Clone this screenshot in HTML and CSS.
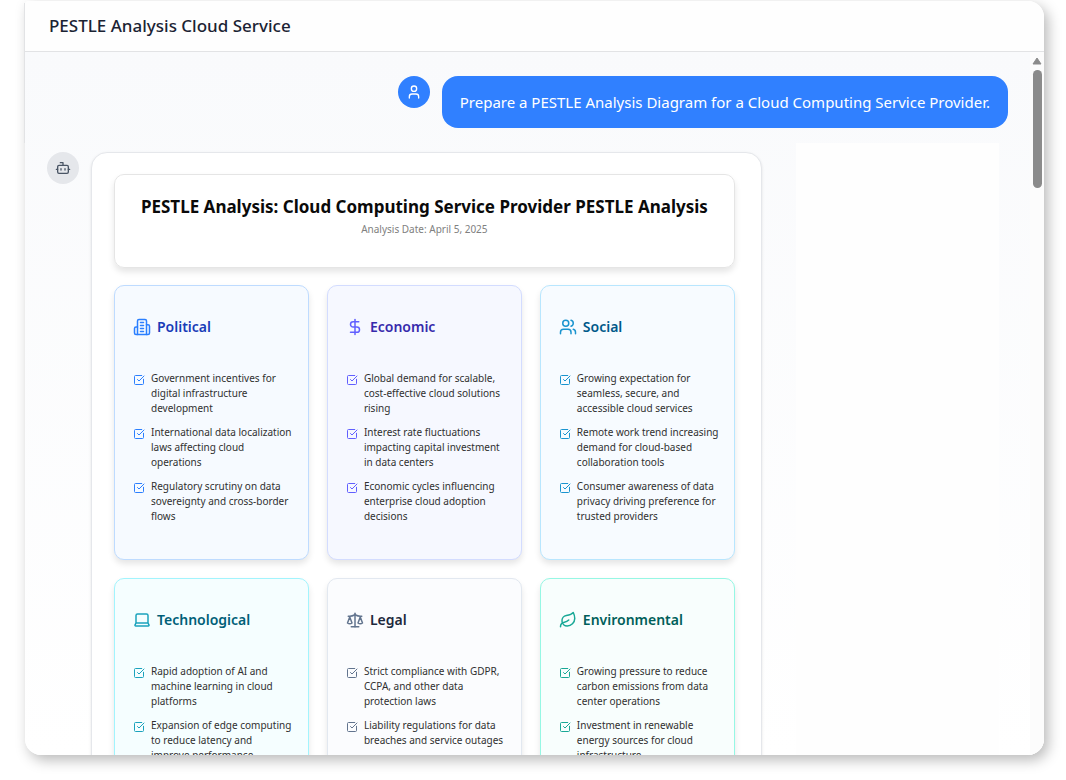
FILE: index.html
```html
<!DOCTYPE html>
<html lang="en">
<head>
    <meta charset="UTF-8">
    <meta name="viewport" content="width=device-width, initial-scale=1.0">
    <title>PESTLE Analysis Cloud Service</title>
    <link rel="stylesheet" href="styles.css">
</head>
<body>
    <!-- shared icons -->
    <svg class="sprite" aria-hidden="true">
        <symbol id="check" viewBox="0 0 24 24">
            <path d="M21 10.5V19a2 2 0 0 1-2 2H5a2 2 0 0 1-2-2V5a2 2 0 0 1 2-2h12.5"/>
            <path d="m9 11 3 3L22 4"/>
        </symbol>
    </svg>

    <div class="window">
        <header class="window-header">
            <h1>PESTLE Analysis Cloud Service</h1>
        </header>

        <main class="chat">
            <div class="message user">
                <div class="avatar">
                    <svg class="icon" viewBox="0 0 24 24"><path d="M19 21v-2a4 4 0 0 0-4-4H9a4 4 0 0 0-4 4v2"/><circle cx="12" cy="7" r="4"/></svg>
                </div>
                <p class="bubble">Prepare a PESTLE Analysis Diagram for a Cloud Computing Service Provider.</p>
            </div>

            <div class="message bot">
                <div class="avatar">
                    <svg class="icon" viewBox="0 0 24 24"><path d="M12 8V4H8"/><rect width="16" height="12" x="4" y="8" rx="2"/><path d="M2 14h2M20 14h2M15 13v2M9 13v2"/></svg>
                </div>
                <article class="report">
                    <div class="report-title">
                        <h2>PESTLE Analysis: Cloud Computing Service Provider PESTLE Analysis</h2>
                        <p>Analysis Date: April 5, 2025</p>
                    </div>

                    <div class="cards">
                        <section class="card political">
                            <h3>
                                <svg class="icon" viewBox="0 0 24 24"><path d="M6 22V4a2 2 0 0 1 2-2h8a2 2 0 0 1 2 2v18Z"/><path d="M6 12H4a2 2 0 0 0-2 2v6a2 2 0 0 0 2 2h2"/><path d="M18 9h2a2 2 0 0 1 2 2v9a2 2 0 0 1-2 2h-2"/><path d="M10 6h4M10 10h4M10 14h4M10 18h4"/></svg>
                                Political
                            </h3>
                            <ul>
                                <li><svg class="icon"><use href="#check"/></svg><span>Government incentives for digital infrastructure development</span></li>
                                <li><svg class="icon"><use href="#check"/></svg><span>International data localization laws affecting cloud operations</span></li>
                                <li><svg class="icon"><use href="#check"/></svg><span>Regulatory scrutiny on data sovereignty and cross-border flows</span></li>
                            </ul>
                        </section>

                        <section class="card economic">
                            <h3>
                                <svg class="icon" viewBox="0 0 24 24"><path d="M12 2v20"/><path d="M17 5H9.5a3.5 3.5 0 0 0 0 7h5a3.5 3.5 0 0 1 0 7H6"/></svg>
                                Economic
                            </h3>
                            <ul>
                                <li><svg class="icon"><use href="#check"/></svg><span>Global demand for scalable, cost-effective cloud solutions rising</span></li>
                                <li><svg class="icon"><use href="#check"/></svg><span>Interest rate fluctuations impacting capital investment in data centers</span></li>
                                <li><svg class="icon"><use href="#check"/></svg><span>Economic cycles influencing enterprise cloud adoption decisions</span></li>
                            </ul>
                        </section>

                        <section class="card social">
                            <h3>
                                <svg class="icon" viewBox="0 0 24 24"><path d="M16 21v-2a4 4 0 0 0-4-4H6a4 4 0 0 0-4 4v2"/><circle cx="9" cy="7" r="4"/><path d="M22 21v-2a4 4 0 0 0-3-3.87"/><path d="M16 3.13a4 4 0 0 1 0 7.75"/></svg>
                                Social
                            </h3>
                            <ul>
                                <li><svg class="icon"><use href="#check"/></svg><span>Growing expectation for seamless, secure, and accessible cloud services</span></li>
                                <li><svg class="icon"><use href="#check"/></svg><span>Remote work trend increasing demand for cloud-based collaboration tools</span></li>
                                <li><svg class="icon"><use href="#check"/></svg><span>Consumer awareness of data privacy driving preference for trusted providers</span></li>
                            </ul>
                        </section>

                        <section class="card technological">
                            <h3>
                                <svg class="icon" viewBox="0 0 24 24"><path d="M20 16V6a2 2 0 0 0-2-2H6a2 2 0 0 0-2 2v10m16 0H4m16 0 1.28 2.55a1 1 0 0 1-.9 1.45H3.62a1 1 0 0 1-.9-1.45L4 16"/></svg>
                                Technological
                            </h3>
                            <ul>
                                <li><svg class="icon"><use href="#check"/></svg><span>Rapid adoption of AI and machine learning in cloud platforms</span></li>
                                <li><svg class="icon"><use href="#check"/></svg><span>Expansion of edge computing to reduce latency and<br>improve performance</span></li>
                            </ul>
                        </section>

                        <section class="card legal">
                            <h3>
                                <svg class="icon" viewBox="0 0 24 24"><path d="m16 16 3-8 3 8c-.87.65-1.92 1-3 1s-2.13-.35-3-1Z"/><path d="m2 16 3-8 3 8c-.87.65-1.92 1-3 1s-2.13-.35-3-1Z"/><path d="M7 21h10"/><path d="M12 3v18"/><path d="M3 7h2c2 0 5-1 7-2 2 1 5 2 7 2h2"/></svg>
                                Legal
                            </h3>
                            <ul>
                                <li><svg class="icon"><use href="#check"/></svg><span>Strict compliance with GDPR, CCPA, and other data protection laws</span></li>
                                <li><svg class="icon"><use href="#check"/></svg><span>Liability regulations for data breaches and service outages</span></li>
                            </ul>
                        </section>

                        <section class="card environmental">
                            <h3>
                                <svg class="icon" viewBox="0 0 24 24"><path d="M11 20A7 7 0 0 1 9.8 6.1C15.5 5 17 4.48 19 2c1 2 2 4.18 2 8 0 5.5-4.78 10-10 10Z"/><path d="M2 21c0-3 1.85-5.36 5.08-6C9.5 14.52 12 13 13 12"/></svg>
                                Environmental
                            </h3>
                            <ul>
                                <li><svg class="icon"><use href="#check"/></svg><span>Growing pressure to reduce carbon emissions from data center operations</span></li>
                                <li><svg class="icon"><use href="#check"/></svg><span>Investment in renewable energy sources for cloud infrastructure</span></li>
                            </ul>
                        </section>
                    </div>
                </article>
            </div>

            <div class="side-panel"></div>
            <div class="scrollbar">
                <svg viewBox="0 0 10 8"><path d="M5 1 9 7H1Z"/></svg>
                <div class="thumb"></div>
            </div>
        </main>
    </div>
</body>
</html>
```
FILE: styles.css
```css
* {
    box-sizing: border-box;
}

body {
    position: relative;
    margin: 0;
    padding: 1px 22px 25px 25px;
    height: 100vh;
    overflow: hidden;
    background-color: #ffffff;
    font-family: "Noto Sans", "Open Sans", sans-serif;
}

/* short edge line beside the header */
body::before {
    content: "";
    position: absolute;
    top: 3px;
    left: 24px;
    width: 1px;
    height: 140px;
    background-color: #e2e3e5;
}

h1, h2, h3, p, ul {
    margin: 0;
    padding: 0;
}

.sprite {
    display: none;
}

.icon {
    width: 16px;
    height: 16px;
    flex: none;
    fill: none;
    stroke: currentColor;
    stroke-width: 2;
    stroke-linecap: round;
    stroke-linejoin: round;
}

.window {
    display: flex;
    flex-direction: column;
    height: 100%;
    overflow: hidden;
    border-radius: 4px 16px 16px 16px;
    box-shadow: 4px 5px 14px rgba(0, 0, 0, 0.28);
}

.window-header {
    padding: 12px 24px 13px;
    border-bottom: 1px solid #e2e3e5;
    background-color: #fefefe;
}

.window-header h1 {
    font-size: 17px;
    font-weight: 500;
    line-height: 25px;
    color: #1b2333;
}

/* conversation */
.chat {
    position: relative;
    flex: 1;
    min-height: 0;
    display: flex;
    flex-direction: column;
    gap: 24px;
    padding: 24px 36px 0 22px;
    overflow: hidden;
    background: linear-gradient(#f9fafc, #ffffff);
}

.message {
    display: flex;
    gap: 12px;
}

.message.user {
    justify-content: flex-end;
}

.message.bot {
    width: calc(75% - 6px);
}

.avatar {
    display: flex;
    align-items: center;
    justify-content: center;
    flex: none;
    width: 32px;
    height: 32px;
    border-radius: 50%;
}

.user .avatar {
    background-color: #3080ff;
    color: #ffffff;
}

.bot .avatar {
    background-color: #e5e7eb;
    color: #4a5565;
}

.bubble {
    padding: 14px 18px;
    border-radius: 16px;
    background-color: #3080ff;
    color: #ffffff;
    font-size: 15px;
    line-height: 24px;
}

.report {
    flex: 1;
    padding: 21px 26px 21px 22px;
    border: 1px solid #e5e7eb;
    border-radius: 16px;
    background-color: #ffffff;
    box-shadow: 0 1px 3px rgba(0, 0, 0, 0.1);
}

.report-title {
    padding: 20px 16px 28px;
    border: 1px solid #e5e5e5;
    border-radius: 10px;
    box-shadow: 0 4px 6px rgba(0, 0, 0, 0.1);
    text-align: center;
}

.report-title h2 {
    font-size: 17px;
    font-weight: 700;
    line-height: 24px;
    color: #0a0a0a;
}

.report-title p {
    font-size: 10px;
    line-height: 20px;
    color: #808080;
}

/* category cards */
.cards {
    display: grid;
    grid-template-columns: repeat(3, 1fr);
    gap: 18px;
    margin-top: 17px;
}

.card {
    padding: 32px 12px 35px 18px;
    border: 1px solid #bfdbfe;
    border-radius: 10px;
    box-shadow: 0 4px 6px rgba(0, 0, 0, 0.1);
}

.card h3 {
    display: flex;
    align-items: center;
    gap: 6px;
    font-size: 14px;
    font-weight: 600;
    line-height: 18px;
}

.card h3 .icon {
    width: 18px;
    height: 18px;
}

.card ul {
    display: flex;
    flex-direction: column;
    gap: 9px;
    margin-top: 35px;
    list-style: none;
}

.card li {
    display: flex;
    gap: 6px;
    font-size: 10px;
    line-height: 15px;
    color: #303030;
}

.card li .icon {
    width: 12px;
    height: 12px;
    margin-top: 3px;
}

.political {
    background-color: #f6faff;
    border-color: #bedbff;
}
.political h3 { color: #193cb8; }
.political .icon { color: #2b7fff; }

.economic {
    background-color: #f6f8ff;
    border-color: #d3dcff;
}
.economic h3 { color: #372aac; }
.economic .icon { color: #615fff; }

.social {
    background-color: #f7fbff;
    border-color: #b8e6fe;
}
.social h3 { color: #00598a; }
.social .icon { color: #1a94cf; }

.technological {
    background-color: #f5feff;
    border-color: #a2f4fd;
}
.technological h3 { color: #005f78; }
.technological .icon { color: #1ba3bd; }

.legal {
    background-color: #fbfcfe;
    border-color: #e2e8f0;
}
.legal h3 { color: #1d293d; }
.legal .icon { color: #62748e; }

.environmental {
    background-color: #f8fefd;
    border-color: #96f7e4;
}
.environmental h3 { color: #005f5a; }
.environmental .icon { color: #19a896; }

/* blank panel and scrollbar lie over the conversation */
.side-panel {
    position: absolute;
    top: 91px;
    right: 45px;
    bottom: 0;
    width: 203px;
    background-color: #fefefe;
}

.scrollbar {
    position: absolute;
    top: 0;
    right: 0;
    bottom: 0;
    display: flex;
    flex-direction: column;
    align-items: center;
    gap: 5px;
    width: 14px;
    padding-top: 5px;
    background-color: #fcfcfc;
}

.scrollbar svg {
    width: 10px;
    height: 8px;
    fill: #8b8b8b;
    stroke: #8b8b8b;
    stroke-linejoin: round;
}

.thumb {
    width: 9px;
    height: 118px;
    border-radius: 5px;
    background-color: #8b8b8b;
}
```
